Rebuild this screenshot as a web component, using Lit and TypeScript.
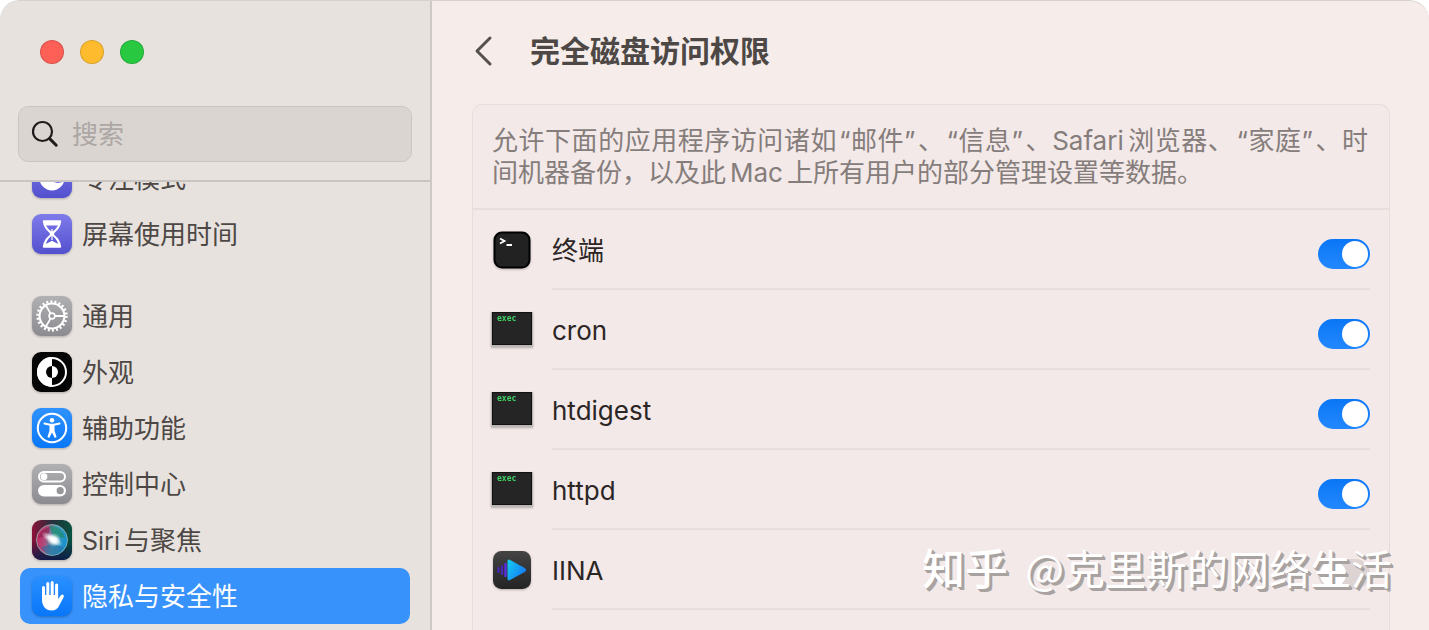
import { LitElement, html, css, svg } from "lit";
import { customElement, property } from "lit/decorators.js";
import { classMap } from "lit/directives/class-map.js";

const squircle = (fill: string) => svg`<rect width="40" height="40" rx="9" fill=${fill}></rect>`;

const glyphs: Record<string, unknown> = {
  focus: svg`
    <linearGradient id="g" x2="0" y2="1"><stop stop-color="#7d79e6"/><stop offset="1" stop-color="#5350cf"/></linearGradient>
    ${squircle("url(#g)")}
    <circle cx="20" cy="20" r="12.500" fill="#fff"/>
    <circle cx="26" cy="14.500" r="10.500" fill="#6865da"/>`,
  hourglass: svg`
    <linearGradient id="g" x2="0" y2="1"><stop stop-color="#7f7bea"/><stop offset="1" stop-color="#5350cf"/></linearGradient>
    ${squircle("url(#g)")}
    <path d="M12 6.200h16a1.200 1.200 0 0 1 1.200 1.400 17 17 0 0 1-6.600 11.200q-1.300 1.200 0 2.400a17 17 0 0 1 6.600 11.200 1.200 1.200 0 0 1-1.200 1.400H12a1.200 1.200 0 0 1-1.200-1.400 17 17 0 0 1 6.600-11.200q1.300-1.200 0-2.400A17 17 0 0 1 10.800 7.600 1.200 1.200 0 0 1 12 6.200z" fill="#fff"/>
    <path d="M14 11.500h12q-2 3.800-5 5.700h-2q-3-1.900-5-5.700z" fill="#6f6be0"/>
    <path d="M20 21.500q4.500 3 6.200 8.500l-6.200-3.200-6.200 3.200q1.700-5.500 6.200-8.500z" fill="#5f5cd8"/>
    <path d="M20 15v11" stroke="#fff" stroke-width="1.200"/>`,
  gear: svg`
    <linearGradient id="g" x2="0" y2="1"><stop stop-color="#b1b1b4"/><stop offset="1" stop-color="#8b8b90"/></linearGradient>
    ${squircle("url(#g)")}
    <g fill="none" stroke="#fff">
      <circle cx="20" cy="20" r="14.400" stroke-width="2.600" stroke-dasharray="2 2.112"/>
      <circle cx="20" cy="20" r="12.400" stroke-width="2"/>
      <circle cx="20" cy="20" r="2.900" stroke-width="1.600"/>
      <path d="M23 20h9.500M18.500 17.400l-4.700-8.200M18.500 22.600l-4.700 8.200" stroke-width="1.800"/>
    </g>`,
  appearance: svg`
    ${squircle("#050505")}
    <circle cx="20" cy="20" r="14" fill="#050505" stroke="#fff" stroke-width="2"/>
    <path d="M20 5a15 15 0 0 0 0 30z" fill="#fff"/>
    <path d="M20 14a6 6 0 0 0 0 12z" fill="#050505"/>
    <path d="M20 14a6 6 0 0 1 0 12z" fill="#fff"/>`,
  accessibility: svg`
    <linearGradient id="g" x2="0" y2="1"><stop stop-color="#2f92ff"/><stop offset="1" stop-color="#0a78f8"/></linearGradient>
    ${squircle("url(#g)")}
    <circle cx="20" cy="20" r="14.200" fill="none" stroke="#fff" stroke-width="2"/>
    <circle cx="20" cy="12.200" r="2.300" fill="#fff"/>
    <path d="M12.500 15.500 18 16.700h4l5.500-1.200M20 17v6" fill="none" stroke="#fff" stroke-width="2" stroke-linecap="round"/>
    <path d="M17.600 16h4.800l.2 7 2 6-1.800 1L20 24.500 17.200 30l-1.800-1 2-6z" fill="#fff"/>`,
  controls: svg`
    <linearGradient id="g" x2="0" y2="1"><stop stop-color="#b1b1b4"/><stop offset="1" stop-color="#8b8b90"/></linearGradient>
    ${squircle("url(#g)")}
    <rect x="7" y="8" width="26" height="9.500" rx="4.750" fill="none" stroke="#fff" stroke-width="2"/>
    <circle cx="12" cy="12.700" r="3.400" fill="#fff"/>
    <rect x="6" y="21" width="28" height="11.500" rx="5.750" fill="#fff"/>
    <circle cx="28.200" cy="26.700" r="3.600" fill="#97979b"/>`,
  siri: svg`
    <linearGradient id="g" x2="1" y2="0"><stop stop-color="#8c1238"/><stop offset=".5" stop-color="#26303c"/><stop offset="1" stop-color="#08523f"/></linearGradient>
    <linearGradient id="t" x2="0" y2="1"><stop offset=".5" stop-color="#0b1a4a" stop-opacity="0"/><stop offset="1" stop-color="#0b1a4a" stop-opacity=".9"/></linearGradient>
    <linearGradient id="b" x2="1" y2=".2"><stop stop-color="#c81e58"/><stop offset=".35" stop-color="#b04a7c"/><stop offset=".62" stop-color="#4a9cb4"/><stop offset="1" stop-color="#1a92d0"/></linearGradient>
    <radialGradient id="w" cx=".5" cy=".5" r=".5"><stop stop-color="#fff"/><stop offset=".35" stop-color="#fff" stop-opacity=".8"/><stop offset="1" stop-color="#fff" stop-opacity="0"/></radialGradient>
    ${squircle("url(#g)")}
    ${squircle("url(#t)")}
    <circle cx="20" cy="20" r="15.500" fill="url(#b)" stroke="#8fb5b0" stroke-opacity=".8"/>
    <path d="M9 27q6 0 10-4 6 3 13 4-4 8-12 8-7-1-11-8z" fill="#2a6a9c" fill-opacity=".6"/>
    <path d="M17 6q12-1 16 12l-11-1z" fill="#1f8c70" fill-opacity=".75"/>
    <path d="M6 18q3-9 12-11l-2 9z" fill="#7a1440" fill-opacity=".5"/>
    <ellipse cx="20" cy="19" rx="12" ry="4.500" transform="rotate(30 20 19)" fill="url(#w)"/>
    <circle cx="22" cy="20" r="7" fill="url(#w)"/>`,
  hand: svg`
    <linearGradient id="g" x2="0" y2="1"><stop stop-color="#2b90ff"/><stop offset="1" stop-color="#0877fa"/></linearGradient>
    ${squircle("url(#g)")}
    <path d="M11.500 11.500V24M15.800 7.500V20M20.200 6.500V20M24.600 9V22" stroke="#fff" stroke-width="3" stroke-linecap="round"/>
    <path d="M10 19h16.100v4.200l2.600-3.600q1.300-1.500 2.700-.7.900.8.200 2.300l-4.500 8.600Q25 34.500 19.600 34.500c-6 0-9.600-4.500-9.600-11z" fill="#fff"/>`,
  terminal: svg`
    <rect x="1.500" y="1.500" width="37" height="37" rx="8.500" fill="#000"/>
    <rect x="3.500" y="3.500" width="33" height="33" rx="6.500" fill="#222"/>
    <path d="m8 8.500 4.500 2.500L8 13.500M14.500 15h5.500" fill="none" stroke="#fff" stroke-width="1.800"/>`,
  exec: svg`
    <rect x="-1" y="2" width="42" height="35" fill="#b9b6b5"/>
    <rect x="0" y="2" width="40" height="33" fill="#111"/>
    <rect x="1" y="3" width="38" height="31" fill="#252525"/>
    <text x="5" y="11" class="exec">exec</text>`,
  iina: svg`
    <linearGradient id="g" x2="0" y2="1"><stop stop-color="#454444"/><stop offset="1" stop-color="#242424"/></linearGradient>
    <linearGradient id="p" x2="1" y2=".6"><stop stop-color="#13d0f5"/><stop offset="1" stop-color="#1679f2"/></linearGradient>
    <rect x="1" y="1" width="38" height="38" rx="8.500" fill="url(#g)"/>
    <path d="M6.500 18v4M10 16v8" stroke="#4a27b8" stroke-width="2.200" stroke-linecap="round"/>
    <path d="M13.500 14v12" stroke="#5b2fe0" stroke-width="2.400" stroke-linecap="round"/>
    <path d="M15.500 11.500q0-2.800 2.600-1.500l14.600 8q3 2 0 4l-14.600 8q-2.600 1.300-2.600-1.500z" fill="url(#p)"/>`,
};

@customElement("app-glyph")
class AppGlyph extends LitElement {
  @property() name = "";
  static styles = css`
    :host { display: block; width: 40px; height: 40px; flex: none; }
    svg { display: block; width: 100%; height: 100%; overflow: visible; filter: drop-shadow(0 1px 1px rgba(0, 0, 0, 0.25)); }
    .exec { font: bold 8px "DejaVu Sans Mono", monospace; fill: #3fd565; }
  `;
  render() {
    return html`<svg viewBox="0 0 40 40" aria-hidden="true">${glyphs[this.name]}</svg>`;
  }
}

const sections = [
  [
    { icon: "focus", label: "专注模式" },
    { icon: "hourglass", label: "屏幕使用时间" },
  ],
  [
    { icon: "gear", label: "通用" },
    { icon: "appearance", label: "外观" },
    { icon: "accessibility", label: "辅助功能" },
    { icon: "controls", label: "控制中心" },
    { icon: "siri", latin: "Siri", label: "与聚焦" },
    { icon: "hand", label: "隐私与安全性", selected: true },
  ],
] as { icon: string; label: string; latin?: string; selected?: boolean }[][];

const apps = [
  { icon: "terminal", name: "终端", on: true },
  { icon: "exec", name: "cron", on: true },
  { icon: "exec", name: "htdigest", on: true },
  { icon: "exec", name: "httpd", on: true },
  { icon: "iina", name: "IINA", on: false },
];

@customElement("app-root")
class AppRoot extends LitElement {
  static styles = css`
    * { box-sizing: border-box; }
    :host {
      display: block;
      height: 100vh;
      background: #fff;
      font: 26px/32px Inter, "Noto Sans CJK SC", sans-serif;
      color: #4d4845;
    }
    .window {
      position: relative;
      display: flex;
      height: 100%;
      overflow: hidden;
      border-radius: 20px 20px 0 0;
      border-top: 1px solid #d6d1ce;
      background: #f6edeb;
    }
    .sidebar {
      flex: none;
      display: flex;
      flex-direction: column;
      width: 432px;
      background: #e7e2de;
      border-right: 2px solid #cfc9c6;
    }
    .top {
      flex: none;
      padding: 39px 18px 18px;
      border-bottom: 2px solid #cac5c2;
    }
    .lights { display: flex; gap: 16px; padding-left: 22px; margin-bottom: 42px; }
    .light { width: 24px; height: 24px; padding: 0; border: 1px solid rgba(0, 0, 0, 0.14); border-radius: 50%; }
    .close { background: #fe5f57; }
    .minimize { background: #febb2e; }
    .zoom { background: #28c840; }
    .search {
      display: flex;
      align-items: center;
      gap: 13px;
      height: 56px;
      padding: 0 12px;
      border: 1px solid #cbc6c2;
      border-radius: 10px;
      background: #dad5d1;
    }
    .search svg { flex: none; width: 28px; height: 28px; }
    .search input {
      flex: 1;
      min-width: 0;
      padding: 2px 0 0;
      border: 0;
      outline: 0;
      background: none;
      font: inherit;
      color: inherit;
    }
    .search input::placeholder { color: #aca7a4; opacity: 1; }
    .scroller { flex: 1; min-height: 0; overflow: hidden; }
    .list { display: flex; flex-direction: column; gap: 26px; margin-top: -32px; padding: 0 20px; }
    .item {
      display: flex;
      align-items: center;
      gap: 10px;
      height: 56px;
      padding-left: 12px;
      border-radius: 10px;
      color: inherit;
      text-decoration: none;
      white-space: nowrap;
    }
    .name { padding-top: 2px; }
    .selected { background: #3792fb; color: #fff; }
    .latin { font-size: 25px; }
    .before { margin-right: 4px; }
    .both { margin: 0 4px; }
    .quoted { margin: 0 2px; }
    .main { flex: 1; min-width: 0; display: flex; flex-direction: column; padding: 0 39px 0 40px; }
    .bar { flex: none; display: flex; align-items: center; gap: 34px; height: 103px; padding-bottom: 4px; }
    .back { width: 24px; height: 32px; padding: 0; border: 0; background: none; color: #57514e; }
    .back svg { display: block; width: 24px; height: 32px; }
    h1 { margin: 0; font-size: 30px; line-height: 40px; font-weight: 700; }
    .card { flex: 1; border: 1px solid #e8dddb; border-bottom: 0; border-radius: 10px 10px 0 0; background: #f3e9e8; }
    .note { margin: 0; padding: 20px 21px 19px 19px; border-bottom: 2px solid #e8dedc; color: #857d7b; text-align: justify; }
    .rows { margin: 0; padding: 0 19px; list-style: none; }
    .row { display: flex; align-items: center; gap: 20px; height: 80px; color: #2b2625; }
    .cell { flex: 1; display: flex; align-items: center; justify-content: space-between; height: 80px; padding-top: 4px; border-bottom: 2px solid #e8dedc; }
    .toggle {
      appearance: none;
      display: flex;
      width: 52px;
      height: 30px;
      margin: 6px 0 0;
      padding: 2px;
      border-radius: 15px;
      background: #dcd3d2;
    }
    .toggle::before { content: ""; width: 26px; height: 26px; border-radius: 50%; background: #fff; }
    .toggle:checked { justify-content: flex-end; background: linear-gradient(#0a76f5, #2388ff); }
    .watermark {
      position: absolute;
      right: 37px;
      bottom: 33px;
      font-size: 41px;
      line-height: 60px;
      color: #fff;
      text-shadow: 1px 1px 0 #a8a2a1, 2px 2px 0 #a8a2a1, 3px 3px 0 #a8a2a1;
      pointer-events: none;
      white-space: nowrap;
      font-family: "Noto Sans CJK SC", sans-serif;
    }
    .brand { font-size: 43px; font-weight: 500; margin-right: 8px; }
  `;

  render() {
    return html`
      <div class="window">
        <nav class="sidebar">
          <div class="top">
            <div class="lights">
              <button class="light close" aria-label="关闭"></button>
              <button class="light minimize" aria-label="最小化"></button>
              <button class="light zoom" aria-label="缩放"></button>
            </div>
            <label class="search">
              <svg viewBox="0 0 28 28" fill="none" stroke="#1e1b1a" stroke-linecap="round" aria-hidden="true">
                <circle cx="11.500" cy="11.500" r="9.500" stroke-width="2.200" />
                <path d="m18.600 18.600 6.600 6.600" stroke-width="3" />
              </svg>
              <input type="search" placeholder="搜索" aria-label="搜索" />
            </label>
          </div>
          <div class="scroller">
            <div class="list">
              ${sections.map((items) => html`<div>${items.map((i) => html`
                <a href="#" class=${classMap({ item: true, selected: !!i.selected })}>
                  <app-glyph name=${i.icon}></app-glyph>
                  <span class="name">${i.latin ? html`<span class="latin before">${i.latin}</span>` : ""}${i.label}</span>
                </a>`)}</div>`)}
            </div>
          </div>
        </nav>
        <main class="main">
          <header class="bar">
            <button class="back" aria-label="返回">
              <svg viewBox="0 0 24 32" fill="none" stroke="currentColor" stroke-width="3" stroke-linecap="round" stroke-linejoin="round"><path d="M18 3 5 16l13 13" /></svg>
            </button>
            <h1>完全磁盘访问权限</h1>
          </header>
          <section class="card">
            <p class="note">允许下面的应用程序访问诸如<span class="quoted">“邮件”</span>、<span class="quoted">“信息”</span>、<span class="before">Safari</span>浏览器、<span class="quoted">“家庭”</span>、时间机器备份，以及此<span class="both">Mac</span>上所有用户的部分管理设置等数据。</p>
            <ul class="rows">
              ${apps.map((a, n) => html`
                <li class="row">
                  <app-glyph name=${a.icon}></app-glyph>
                  <div class="cell">
                    <label for="app-${n}">${a.name}</label>
                    <input class="toggle" id="app-${n}" type="checkbox" role="switch" .checked=${a.on} />
                  </div>
                </li>`)}
            </ul>
          </section>
        </main>
        <div class="watermark"><span class="brand">知乎</span> @克里斯的网络生活</div>
      </div>
    `;
  }
}
